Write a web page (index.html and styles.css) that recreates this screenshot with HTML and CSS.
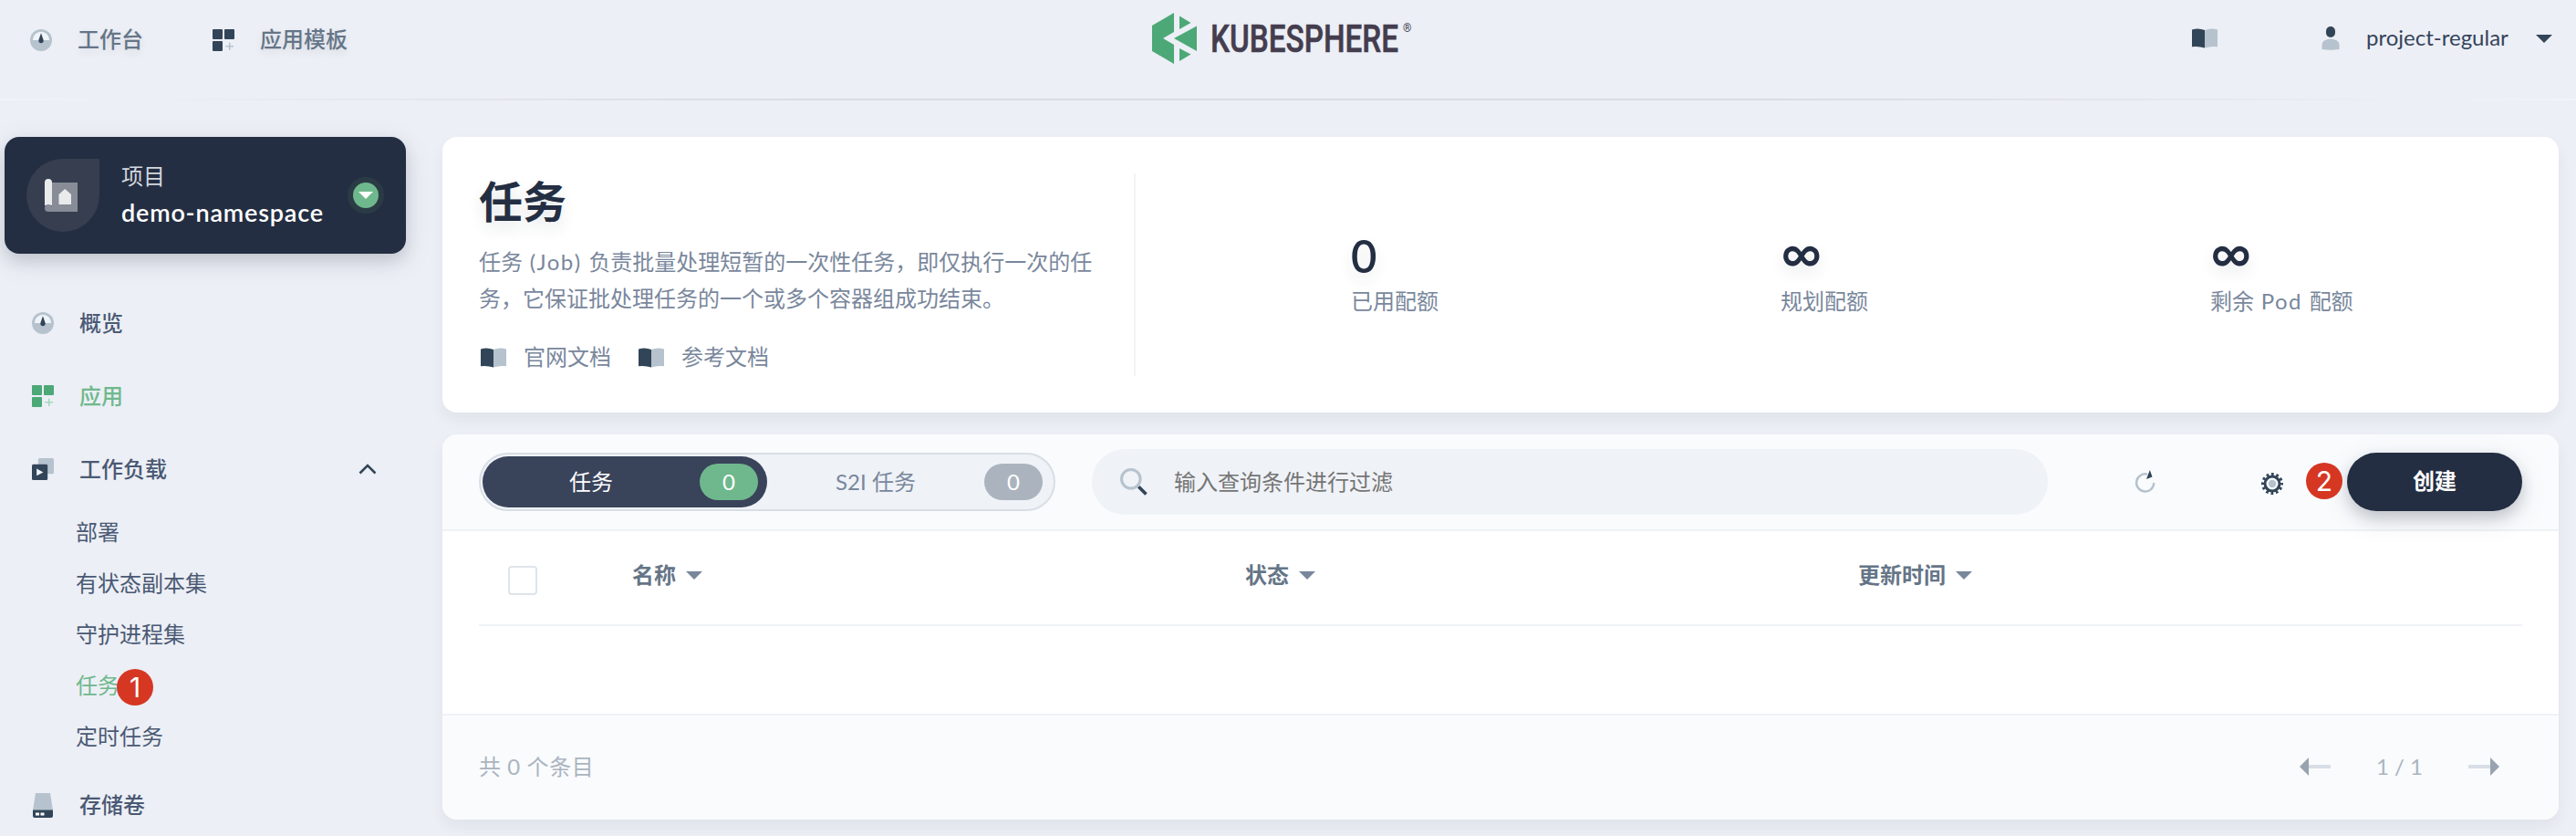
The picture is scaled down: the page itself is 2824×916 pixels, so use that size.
FILE: index.html
```html
<!DOCTYPE html>
<html lang="zh-CN">
<head>
    <meta charset="UTF-8">
    <meta name="viewport" content="width=device-width, initial-scale=1.0">
    <title>任务 - KubeSphere</title>
    <link rel="stylesheet" href="styles.css">
</head>
<body>
    <!-- shared icons -->
    <svg class="defs" width="0" height="0">
        <symbol id="icon-gauge" viewBox="0 0 24 24">
            <circle cx="12" cy="12" r="12" fill="#b6c2cd"/>
            <path d="M2.8 12a9.2 9.2 0 0 1 18.4 0z" fill="#eff4f9"/>
            <path d="M12 4.2l2.6 7.6c.5 1.900-.7 3.400-2.600 3.400s-3.100-1.500-2.600-3.400z" fill="#324558"/>
        </symbol>
        <symbol id="icon-apps" viewBox="0 0 24 24">
            <path d="M1 0h9a1 1 0 0 1 1 1v9a1 1 0 0 1-1 1H1a1 1 0 0 1-1-1V1a1 1 0 0 1 1-1zM14 0h9a1 1 0 0 1 1 1v9a1 1 0 0 1-1 1h-9a1 1 0 0 1-1-1V1a1 1 0 0 1 1-1zM1 13h9a1 1 0 0 1 1 1v9a1 1 0 0 1-1 1H1a1 1 0 0 1-1-1v-9a1 1 0 0 1 1-1z" fill="currentColor"/>
            <path class="plus" d="M18 14.800h1.500v3.300H23v1.500h-3.500V23H18v-3.400h-3.500v-1.500H18z"/>
        </symbol>
        <symbol id="icon-book" viewBox="0 0 28 22">
            <path d="M0 1.500Q7-.800 14 2V21.500Q7 19.200 0 20.200z" fill="#324558"/>
            <path d="M28 1.500Q21-.800 14 2V21.500Q21 19.200 28 20.200z" fill="#b6c2cd"/>
        </symbol>
    </svg>

    <header class="header">
        <nav class="header-nav">
            <a class="header-link"><svg class="icon"><use href="#icon-gauge"/></svg>工作台</a>
            <a class="header-link"><svg class="icon"><use href="#icon-apps"/></svg>应用模板</a>
        </nav>
        <svg class="logo" width="290" height="60" viewBox="0 0 290 60">
            <g fill="#4ca877">
                <path d="M0 16L24 2V23L12 30L24 37V58L0 44z"/>
                <path d="M30 5.500L42.500 13L30 20z"/>
                <path d="M49 16.500V44L24 30z"/>
                <path d="M30 41L42.500 47.500L30 55z"/>
            </g>
            <text class="logo-text" x="64" y="45" textLength="206" lengthAdjust="spacingAndGlyphs">KUBESPHERE</text>
            <text class="logo-reg" x="275" y="23">®</text>
        </svg>
        <div class="header-right">
            <svg class="book" viewBox="0 0 28 22"><use href="#icon-book"/></svg>
            <div class="user">
                <svg class="user-icon" width="20" height="26" viewBox="0 0 20 26">
                    <rect x="5" y="0" width="10" height="12" rx="5" fill="#324558"/>
                    <path d="M.5 25V20C.5 11.500 19.500 11.500 19.500 20V25Q10 26.500.5 25z" fill="#b6c2cd"/>
                </svg>
                <span class="user-name">project-regular</span>
                <svg width="18" height="9" viewBox="0 0 18 9"><path d="M0 0H18L9 9z" fill="#324558"/></svg>
            </div>
        </div>
    </header>

    <div class="layout">
        <aside class="sidebar">
            <div class="project">
                <div class="project-icon">
                    <svg width="36" height="36" viewBox="0 0 36 36">
                        <path d="M8 4H36V36H4V30H8z" fill="#878c96"/>
                        <path d="M0 4a4 4 0 0 1 8 0V29H0z" fill="#e9eaec"/>
                        <rect x="0" y="28" width="8" height="8" rx="4" fill="#878c96"/>
                        <path d="M15.500 17L22.200 11L29 17V28H15.500z" fill="#e9eaec"/>
                    </svg>
                </div>
                <div class="project-info">
                    <div class="project-label">项目</div>
                    <div class="project-name">demo-namespace</div>
                </div>
                <div class="project-toggle">
                    <svg width="16" height="8" viewBox="0 0 16 8"><path d="M0 0H16L8 8z" fill="#fff"/></svg>
                </div>
            </div>

            <ul class="menu">
                <li class="menu-item"><svg class="icon"><use href="#icon-gauge"/></svg>概览</li>
                <li class="menu-item active"><svg class="icon"><use href="#icon-apps"/></svg>应用</li>
                <li class="menu-item">
                    <svg class="icon" viewBox="0 0 24 24">
                        <rect x="6.800" y="0" width="17.200" height="17.200" rx="1.500" fill="#b6c2cd"/>
                        <rect x="0" y="6.800" width="17.200" height="17.200" rx="1.500" fill="#324558"/>
                        <path d="M5.200 11.500L12.400 15.400L5.200 19.300z" fill="#eff4f9"/>
                    </svg>
                    工作负载
                    <svg class="chevron" width="20" height="12" viewBox="0 0 20 12"><path d="M1.500 10.500L10 2L18.500 10.500" fill="none" stroke="#324558" stroke-width="2.600"/></svg>
                </li>
            </ul>
            <ul class="submenu">
                <li>部署</li>
                <li>有状态副本集</li>
                <li>守护进程集</li>
                <li class="active">任务<span class="step step-menu">1</span></li>
                <li>定时任务</li>
            </ul>
            <ul class="menu menu-last">
                <li class="menu-item">
                    <svg class="icon icon-disk" viewBox="0 0 24 28">
                        <path d="M4 1H20L23 20H1z" fill="#b6c2cd"/>
                        <path d="M1 19.500H23V26a2 2 0 0 1-2 2H3a2 2 0 0 1-2-2z" fill="#324558"/>
                        <path d="M4 22.500h4v3H4zM9.500 22.500h4v3h-4z" fill="#fff"/>
                    </svg>
                    存储卷
                </li>
            </ul>
        </aside>

        <main class="main">
            <section class="panel banner">
                <div class="intro">
                    <h1>任务</h1>
                    <p>任务<span class="latin"> (Job) </span>负责批量处理短暂的一次性任务，即仅执行一次的任<br>务，它保证批处理任务的一个或多个容器组成功结束。</p>
                    <div class="docs">
                        <a><svg class="book" viewBox="0 0 28 22"><use href="#icon-book"/></svg>官网文档</a>
                        <a><svg class="book" viewBox="0 0 28 22"><use href="#icon-book"/></svg>参考文档</a>
                    </div>
                </div>
                <div class="stats">
                    <div class="stat">
                        <div class="stat-value">0</div>
                        <div class="stat-label">已用配额</div>
                    </div>
                    <div class="stat">
                        <div class="stat-value infinity">∞</div>
                        <div class="stat-label">规划配额</div>
                    </div>
                    <div class="stat">
                        <div class="stat-value infinity">∞</div>
                        <div class="stat-label">剩余<span class="latin"> Pod </span>配额</div>
                    </div>
                </div>
            </section>

            <section class="panel list">
                <div class="toolbar">
                    <div class="tabs">
                        <div class="tab selected"><span class="tab-name">任务</span><span class="count">0</span></div>
                        <div class="tab"><span class="tab-name">S2I 任务</span><span class="count">0</span></div>
                    </div>
                    <div class="search">
                        <svg width="30" height="30" viewBox="0 0 30 30">
                            <path d="M20.200 20.200L28.500 28.500" stroke="#324558" stroke-width="3.600"/>
                            <circle cx="11.800" cy="11.800" r="10.300" fill="none" stroke="#b6c2cd" stroke-width="3"/>
                        </svg>
                        <span>输入查询条件进行过滤</span>
                    </div>
                    <div class="actions">
                        <svg class="refresh" width="24" height="26" viewBox="0 0 24 26">
                            <path d="M14 4.600A9.600 9.600 0 1 0 21.300 14" fill="none" stroke="#b6c2cd" stroke-width="2.400"/>
                            <path d="M16.800 0L19.500 7.500L13 10z" fill="#324558"/>
                        </svg>
                        <svg class="gear" width="24" height="24" viewBox="-12 -12 24 24">
                            <circle r="8" fill="none" stroke="#324558" stroke-width="3"/>
                            <circle r="10.500" fill="none" stroke="#324558" stroke-width="3" stroke-dasharray="2.750 2.750" stroke-dashoffset="1.375"/>
                            <circle r="4.200" fill="#b6c2cd"/>
                        </svg>
                        <button class="create">创建<span class="step step-create">2</span></button>
                    </div>
                </div>

                <div class="table-head">
                    <span class="checkbox"></span>
                    <div class="col">名称<i class="sort"></i></div>
                    <div class="col">状态<i class="sort"></i></div>
                    <div class="col">更新时间<i class="sort"></i></div>
                </div>
                <div class="table-body"></div>

                <div class="footer">
                    <span class="total">共 0 个条目</span>
                    <div class="pagination">
                        <svg width="34" height="20" viewBox="0 0 34 20"><path d="M9 8H34V12H9z" fill="#d8dee5"/><path d="M0 10L10 0V20z" fill="#99a3b0"/></svg>
                        <span>1 / 1</span>
                        <svg width="34" height="20" viewBox="0 0 34 20"><path d="M0 8H25V12H0z" fill="#d8dee5"/><path d="M34 10L24 0V20z" fill="#99a3b0"/></svg>
                    </div>
                </div>
            </section>
        </main>
    </div>
</body>
</html>
```
FILE: styles.css
```css
* {
    box-sizing: border-box;
}
body {
    margin: 0;
    height: 916px;
    overflow: hidden;
    background: #eceff5;
    color: #4a5974;
    font-family: Lato, "Noto Sans CJK SC", sans-serif;
    font-size: 24px;
    line-height: 40px;
}
ul, h1, p {
    margin: 0;
    padding: 0;
    list-style: none;
}
svg {
    display: block;
    flex: none;
}
.defs {
    position: absolute;
}
.icon {
    width: 24px;
    height: 24px;
    overflow: visible;
}
.plus {
    fill: var(--plus, #b6c2cd);
}
.book {
    width: 28px;
    height: 22px;
}
.latin {
    letter-spacing: 1.5px;
}

/* header */
.header {
    display: grid;
    grid-template-columns: 1fr 290px 1fr;
    align-items: start;
    height: 110px;
    border-bottom: 2px solid;
    border-image: linear-gradient(to right, #f0f3f8 0, #eceff5 150px, #d8dde3 900px, #d8dde3 1924px, #eceff5 2650px, #f0f3f8 100%) 1;
}
.header-nav {
    display: flex;
    gap: 76px;
    padding: 23px 0 0 33px;
}
.header-link {
    display: flex;
    align-items: center;
    gap: 28px;
    color: #657587;
    font-weight: 500;
    text-shadow: 0 4px 8px rgba(36, 46, 66, 0.1);
}
.header-link .icon {
    margin-top: 2px;
    color: #324558;
}
.logo {
    margin: 12px 0 0 -4px;
    overflow: visible;
}
.logo-text {
    fill: #443d4e;
    font-family: Roboto, sans-serif;
    font-size: 42px;
    font-weight: 500;
    stroke: #443d4e;
    stroke-width: 0.6px;
    stroke-linejoin: round;
}
.logo-reg {
    fill: #443d4e;
    font-family: Roboto, sans-serif;
    font-size: 12px;
}
.header-right {
    display: flex;
    justify-content: flex-end;
    align-items: center;
    gap: 114px;
    padding: 23px 26px 0 0;
    color: #36435c;
}
.user {
    display: flex;
    align-items: center;
}
.user-name {
    width: 155px;
    margin: -2px 31px 0 29px;
    white-space: nowrap;
}

/* sidebar */
.layout {
    display: flex;
    gap: 40px;
    padding: 40px 19px 0 5px;
}
.sidebar {
    width: 440px;
    flex: none;
}
.project {
    display: flex;
    align-items: center;
    height: 128px;
    padding: 0 24px;
    border-radius: 16px;
    background: #242e42;
    box-shadow: 0 8px 16px 0 rgba(36, 46, 66, 0.14), 0 8px 32px 0 rgba(36, 46, 66, 0.1);
}
.project-icon {
    display: flex;
    align-items: center;
    justify-content: center;
    width: 80px;
    height: 80px;
    border-radius: 40px 0 40px 40px;
    background: #363e50;
}
.project-icon svg {
    margin-left: -4px;
}
.project-info {
    flex: 1;
    margin: -2px 0 0 24px;
}
.project-label {
    color: #d3d7de;
}
.project-name {
    color: #fff;
    font-size: 27px;
    font-weight: 600;
    letter-spacing: 0.8px;
    white-space: nowrap;
}
.project-toggle {
    display: flex;
    align-items: center;
    justify-content: center;
    width: 40px;
    height: 40px;
    border: 6px solid #2b3b45;
    border-radius: 50%;
    background: #6fb88d;
}
.menu {
    margin-top: 36px;
}
.menu-item {
    display: flex;
    align-items: center;
    height: 80px;
    padding: 0 32px 0 30px;
    font-weight: 500;
}
.menu-item .icon {
    margin-right: 28px;
}
.menu-item.active {
    color: #6fb88d;
}
.menu-item.active .icon {
    --plus: #a2d8bb;
    color: #4ca877;
}
.menu .icon-disk {
    height: 28px;
}
.chevron {
    margin-left: auto;
}
.submenu {
    margin-top: 1px;
    padding-left: 78px;
}
.submenu li {
    height: 56px;
    line-height: 56px;
}
.submenu .active {
    position: relative;
    color: #6fb88d;
}
.menu-last {
    margin-top: 7px;
}

/* numbered markers over the page */
.step {
    position: absolute;
    width: 40px;
    height: 40px;
    border-radius: 50%;
    background: #d53723;
    color: #fff;
    font: 400 30px/40px Inter, sans-serif;
    text-align: center;
}
.step-menu {
    left: 45px;
    top: 10px;
}
.step-create {
    left: -45px;
    top: 11px;
}

/* main */
.main {
    display: flex;
    flex: 1;
    flex-direction: column;
    gap: 24px;
    min-width: 0;
}
.panel {
    border-radius: 16px;
    background: #fff;
    box-shadow: 0 8px 16px 0 rgba(36, 46, 66, 0.06);
}
.banner {
    display: flex;
    height: 302px;
    padding: 40px 0 40px 40px;
}
.intro {
    flex: none;
    width: 720px;
    height: 222px;
    border-right: 2px solid #f1f3f6;
    color: #79879c;
    white-space: nowrap;
}
.intro h1 {
    height: 77px;
    color: #242e42;
    font-size: 48px;
    font-weight: 700;
    line-height: 61px;
    text-shadow: 0 8px 16px rgba(36, 46, 66, 0.12);
}
.docs {
    display: flex;
    gap: 30px;
    margin-top: 24px;
}
.docs a {
    display: flex;
    align-items: center;
    gap: 21px;
}
.docs .book {
    margin: 2px -2px 0 2px;
}
.docs a + a .book {
    margin-left: 0;
}
.stats {
    display: grid;
    flex: 1;
    grid-template-columns: repeat(3, 471px);
    min-width: 0;
    padding: 62px 0 0 236px;
    justify-content: start;
}
.stat-value {
    height: 56px;
    color: #242e42;
    font-size: 49px;
    font-weight: 600;
    line-height: 56px;
    text-shadow: 0 8px 16px rgba(36, 46, 66, 0.1);
}
.infinity {
    font-size: 62px;
    line-height: 46px;
}
.stat-label {
    margin-top: 2px;
    color: #79879c;
}

/* list */
.list {
    height: 422px;
    overflow: hidden;
}
.toolbar {
    display: flex;
    align-items: center;
    height: 106px;
    padding: 0 40px;
    border-bottom: 2px solid #eff2f6;
    background: #f9fbfd;
}
.tabs {
    display: flex;
    flex: none;
    width: 632px;
    height: 64px;
    padding: 2px;
    border: 2px solid #d8dee5;
    border-radius: 32px;
    background: #eff2f7;
}
.tab {
    display: flex;
    align-items: center;
    width: 312px;
    height: 56px;
    padding-right: 10px;
    border-radius: 28px;
    color: #79879c;
}
.tab.selected {
    background: #39435a;
    color: #fff;
}
.tab-name {
    flex: 1;
    text-align: center;
}
.count {
    width: 64px;
    height: 40px;
    border-radius: 20px;
    background: #abb4be;
    color: #fff;
    text-align: center;
}
.selected .count {
    background: #6fb88d;
}
.search {
    display: flex;
    flex: none;
    align-items: center;
    gap: 29px;
    width: 1048px;
    height: 72px;
    margin-left: 40px;
    padding-left: 31px;
    border-radius: 36px;
    background: #eff2f7;
    color: #757575;
}
.actions {
    display: flex;
    flex: 1;
    align-items: center;
    justify-content: flex-end;
}
.gear {
    margin: 4px 70px 0 115px;
}
.create {
    position: relative;
    width: 192px;
    height: 64px;
    padding: 0 0 2px;
    border: 0;
    border-radius: 32px;
    background: #242e42;
    box-shadow: 0 8px 16px 0 rgba(36, 46, 66, 0.2), 0 8px 32px 0 rgba(36, 46, 66, 0.1);
    color: #fff;
    font: inherit;
    font-weight: 600;
}
.table-head {
    display: grid;
    grid-template-columns: 136px 672px 672px 1fr;
    height: 104px;
    margin: 0 40px;
    padding: 28px 0 0 32px;
    border-bottom: 2px solid #eff2f6;
    color: #657587;
    font-weight: 600;
}
.checkbox {
    width: 32px;
    height: 32px;
    margin-top: 10px;
    border: 2px solid #dfe4ea;
    border-radius: 4px;
}
.col {
    display: flex;
    align-items: center;
    height: 40px;
}
.sort {
    margin-left: 11px;
    border: 9px solid transparent;
    border-top-color: #79879c;
    border-bottom: 0;
}
.table-body {
    height: 96px;
}
.footer {
    display: flex;
    align-items: center;
    justify-content: space-between;
    height: 116px;
    padding: 0 65px 2px 40px;
    border-top: 2px solid #eff2f6;
    background: #f9fbfd;
    color: #abb4be;
}
.total {
    letter-spacing: 0.6px;
}
.pagination {
    display: flex;
    align-items: center;
    gap: 50px;
}
```
